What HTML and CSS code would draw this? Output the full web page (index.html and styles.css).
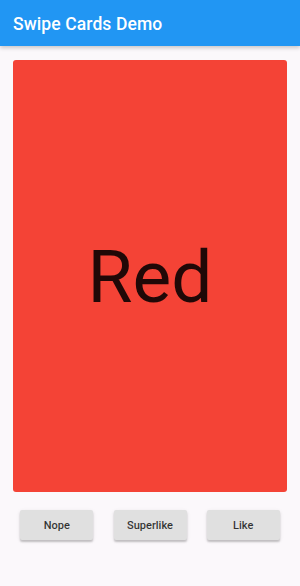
FILE: index.html
```html
<!DOCTYPE html>
<html lang="en">
<head>
  <meta charset="UTF-8" />
  <meta name="viewport" content="width=device-width, initial-scale=1.0"/>
  <title>Swipe Cards Demo</title>
  <link rel="stylesheet" href="styles.css">
</head>
<body>

  <header class="app-bar">
    <h1>Swipe Cards Demo</h1>
  </header>

  <main class="content">
    <!-- Card stack (top card only visible) -->
    <div class="card-stack">
      <div class="card card-red">
        <span class="card-label">Red</span>
      </div>
    </div>

    <!-- Actions -->
    <div class="actions">
      <button class="action-btn">Nope</button>
      <button class="action-btn">Superlike</button>
      <button class="action-btn">Like</button>
    </div>
  </main>

</body>
</html>
```

FILE: styles.css
```css
* { box-sizing: border-box; margin: 0; padding: 0; font-family: Roboto, "Liberation Sans", sans-serif; }
html, body { height: 100%; }
body {
  background-color: #fbf8fb;
  display: flex;
  flex-direction: column;
}
.app-bar {
  height: 46px;
  background-color: #2196f3;
  display: flex;
  align-items: center;
  padding: 0 13px;
  box-shadow: 0 2px 4px rgba(0,0,0,0.2);
  position: relative;
  z-index: 1;
}
.app-bar h1 {
  color: #fff;
  font-size: 17.5px;
  font-weight: 500;
  letter-spacing: 0.1px;
  margin-top: 1px;
}
.content {
  flex: 1;
  display: flex;
  flex-direction: column;
  padding: 14px 13px 0;
}
.card-stack {
  height: 432px;
}
.card {
  height: 100%;
  border-radius: 3px;
  display: flex;
  align-items: center;
  justify-content: center;
}
.card-red { background-color: #f44336; }
.card-label {
  font-size: 73px;
  color: rgba(0,0,0,0.87);
  margin-top: 1px;
}
.actions {
  display: flex;
  justify-content: space-evenly;
  margin: 18px -13px 0;
}
.action-btn {
  width: 73px;
  height: 30px;
  background-color: #e0e0e0;
  border: none;
  border-radius: 2px;
  font-size: 11px;
  font-weight: 500;
  color: rgba(0,0,0,0.78);
  box-shadow: 0 2px 2px rgba(0,0,0,0.2), 0 1px 4px rgba(0,0,0,0.08);
  cursor: pointer;
}
```
